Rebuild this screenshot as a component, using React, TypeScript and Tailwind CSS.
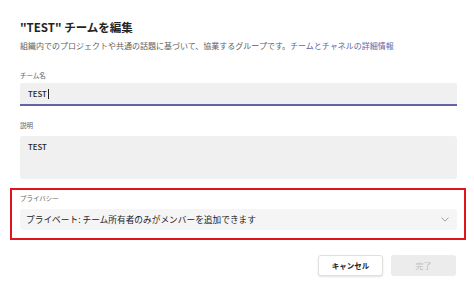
import React from 'react';

const font = { fontFamily: '"Noto Sans CJK JP", "Noto Sans", sans-serif' };

const App: React.FC = () => {
  return (
    <div className="w-[474px] h-[295px] bg-white overflow-hidden text-[#242424]" style={font}>
      <div className="pl-[20px] pr-[17px] pt-[17px]">
        <h2 className="h-[20px] leading-[20px] text-[11.5px] font-bold">"TEST" チームを編集</h2>
        <p className="mt-[2px] h-[14px] leading-[14px] text-[8px] text-[#616161] whitespace-nowrap">
          組織内でのプロジェクトや共通の話題に基づいて、協業するグループです。
          <span className="text-[#6264a7]">チームとチャネルの詳細情報</span>
        </p>

        <label className="block mt-[16px] h-[12px] leading-[12px] text-[6.5px] text-[#616161]">チーム名</label>
        <div className="mt-[2px] h-[23px] bg-[#f0f0f0] border-b-2 border-[#6264a7] rounded-t-[2px] flex items-center pl-[8px] text-[7.8px] font-medium">
          <span>TEST</span>
          <span className="ml-[1px] w-[1px] h-[10px] bg-[#242424]" />
        </div>

        <label className="block mt-[13px] h-[12px] leading-[12px] text-[6.5px] text-[#616161]">説明</label>
        <div className="mt-[5px] h-[43px] bg-[#f0f0f0] rounded-[3px] pl-[8px] pt-[5px] text-[7.8px] leading-[12px] font-medium">
          TEST
        </div>

        <div className="mt-[9px] -ml-[10px] -mr-[9px] border-2 border-[#e0141e] pl-[8px] pr-[7px] pt-[2px] pb-[8px]">
          <label className="block h-[12px] leading-[12px] text-[6.5px] text-[#616161]">プライバシー</label>
          <div className="mt-[5px] h-[21px] bg-[#f5f5f5] rounded-[3px] flex items-center justify-between pl-[6px] pr-[8px] text-[8.7px]">
            <span>プライベート: チーム所有者のみがメンバーを追加できます</span>
            <svg width="8" height="5" viewBox="0 0 8 5" fill="none">
              <path d="M0.5 0.6 L4 4.1 L7.5 0.6" stroke="#8a8a8a" strokeWidth="0.8" />
            </svg>
          </div>
        </div>

        <div className="mt-[15px] flex justify-end gap-[8px] pr-[1px]">
          <button className="w-[65px] h-[21px] bg-white border border-[#e0e0e0] rounded-[3px] shadow-[0_1px_2px_rgba(0,0,0,0.12)] text-[7.5px] font-bold">
            キャンセル
          </button>
          <button className="w-[65px] h-[21px] bg-[#ececec] rounded-[3px] text-[8px] text-[#bdbdbd]">
            完了
          </button>
        </div>
      </div>
    </div>
  );
};

export default App;
